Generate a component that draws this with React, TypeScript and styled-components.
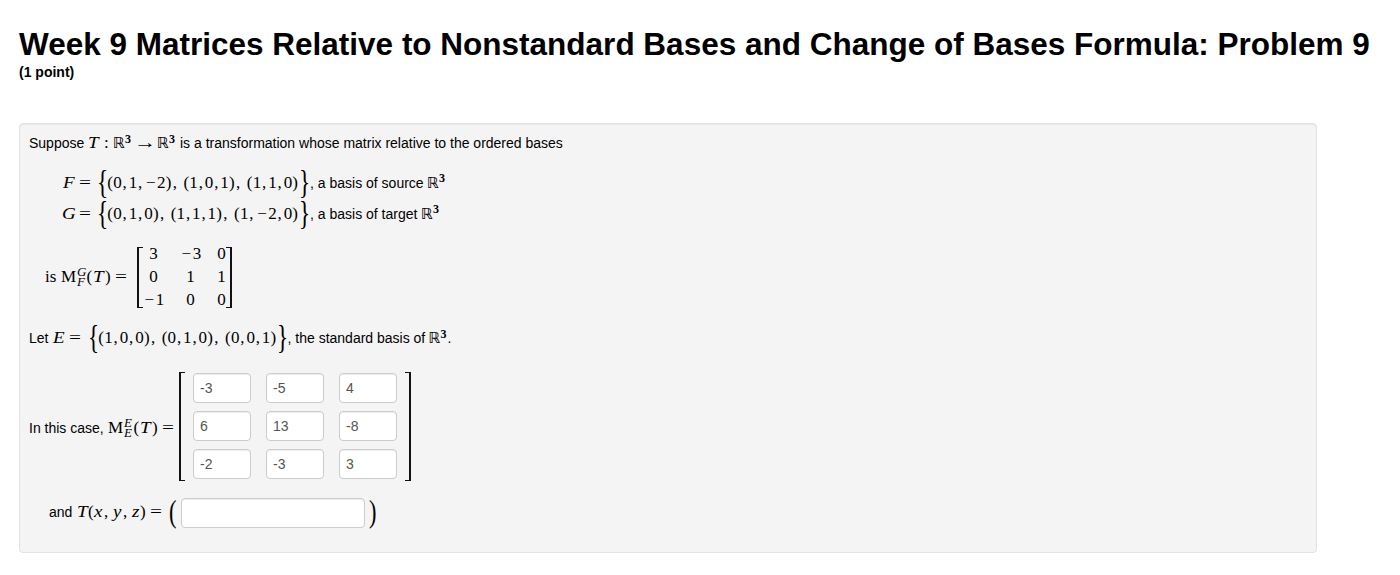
import { ReactNode } from "react"
import styled, { createGlobalStyle } from "styled-components"

const GlobalStyle = createGlobalStyle`
  body {
    margin: 0;
    background-color: #fff;
    color: #000;
    font-family: "Liberation Sans", Arial, sans-serif;
    font-size: 14px;
    line-height: 20px;
  }
`

const Page = styled.main`
  padding: 24px 0 0 19px;
  width: 1381px;
  box-sizing: border-box;
`

const Title = styled.h1`
  margin: 0;
  font-size: 31.5px;
  line-height: 40px;
  font-weight: 700;
  white-space: nowrap;
`

const Points = styled.div`
  margin-bottom: 43px;
  line-height: 16px;
  font-weight: 700;
`

const ProblemBody = styled.section`
  width: 1298px;
  height: 430px;
  box-sizing: border-box;
  padding: 0 9px;
  border: 1px solid #e3e3e3;
  border-radius: 4px;
  background-color: #f4f4f4;
  box-shadow: inset 0 1px 1px rgba(0, 0, 0, 0.05);
`

const Line = styled.div<{ $height: number; $top?: number; $indent?: number }>`
  display: flex;
  align-items: center;
  height: ${(p) => p.$height}px;
  margin-top: ${(p) => p.$top ?? 0}px;
  padding-left: ${(p) => p.$indent ?? 0}px;
  white-space: pre;
`

const Label = styled.div<{ $drop?: number; $lift?: number }>`
  display: flex;
  align-items: center;
  padding-top: ${(p) => p.$drop ?? 0}px;
  padding-bottom: ${(p) => p.$lift ?? 0}px;
`

const Words = styled.span<{ $width?: number }>`
  flex: none;
  width: ${(p) => (p.$width ? `${p.$width}px` : "auto")};
`

const Math = styled.span<{ $width?: number }>`
  display: flex;
  flex: none;
  width: ${(p) => (p.$width ? `${p.$width}px` : "auto")};
  font-family: "Liberation Serif", "Times New Roman", serif;
  font-size: 17px;
`

const Variable = styled(Math)`
  font-style: italic;
  transform: scaleX(1.12);
  transform-origin: left;
`

const Relation = styled(Math)`
  transform: scaleX(1.25);
  transform-origin: left;
`

const Arrow = styled(Math)`
  transform: scaleX(1.3);
  transform-origin: 6px 50%;
`

const Glyph = styled.span<{ $advance: number }>`
  display: flex;
  justify-content: center;
  flex: none;
  width: ${(p) => p.$advance}px;
`

const Comma = styled(Glyph)`
  justify-content: flex-start;
  text-indent: 1px;
`

const Blackboard = styled.span`
  flex: none;
  width: 12px;
  font-family: "DejaVu Sans", sans-serif;
  font-size: 15px;
`

const Exponent = styled.span<{ $width: number }>`
  flex: none;
  width: ${(p) => p.$width}px;
  padding-bottom: 9px;
  font-family: "Liberation Serif", serif;
  font-size: 12px;
  font-weight: 700;
`

const Scripts = styled.span<{ $width: number }>`
  display: flex;
  flex-direction: column;
  flex: none;
  width: ${(p) => p.$width}px;
  font-family: "Liberation Serif", serif;
  font-size: 13px;
  font-style: italic;
  line-height: 9.5px;
`

const Brace = styled.span<{ $width: number }>`
  flex: none;
  width: ${(p) => p.$width}px;
  height: 32px;
  font-family: "Liberation Serif", serif;
  font-size: 33px;
  line-height: 30px;

  > span {
    display: inline-block;
    transform: scaleX(0.7);
    transform-origin: left;
  }
`

const Paren = styled(Brace)`
  font-size: 32px;
  line-height: 29px;
`

const Bracket = styled.span<{ $side: "left" | "right"; $height: number }>`
  flex: none;
  box-sizing: border-box;
  width: 6px;
  height: ${(p) => p.$height}px;
  border: 1px solid #111;
  border-${(p) => p.$side}-width: 2px;
  border-${(p) => (p.$side === "left" ? "right" : "left")}: 0;
`

const MatrixGrid = styled.div`
  display: grid;
  grid-template-columns: 21px 21px 9px;
  grid-auto-rows: 23px;
  column-gap: 16px;
  justify-items: center;
  align-items: center;
  padding-bottom: 1px;
`

const AnswerGrid = styled.div`
  display: grid;
  grid-template-columns: repeat(3, 58px);
  gap: 8px 15px;
  margin: 0 8px;
`

const Answer = styled.input<{ $width: number }>`
  width: ${(p) => p.$width}px;
  height: 30px;
  box-sizing: border-box;
  padding: 4px 6px;
  border: 1px solid #ccc;
  border-radius: 4px;
  background-color: #fff;
  box-shadow: inset 0 1px 1px rgba(0, 0, 0, 0.075);
  color: #555;
  font-family: inherit;
  font-size: 14px;
  line-height: 20px;
  outline: none;
`

const WideAnswer = styled(Answer)`
  margin-right: 4px;
`

// advances in px for upright math glyphs
const advances: Record<string, number> = {
  "(": 6.4,
  ")": 6.4,
  ",": 7.3,
  "−": 12.8,
  " ": 4.1,
}

const Formula = ({ text, width }: { text: string; width?: number }) => (
  <Math $width={width}>
    {text.split("").map((char, i) => {
      const Cell = char === "," ? Comma : Glyph
      return (
        <Cell key={i} $advance={advances[char] ?? 8.2}>
          {char}
        </Cell>
      )
    })}
  </Math>
)

const RealCubed = ({ width = 10 }: { width?: number }) => (
  <>
    <Blackboard>ℝ</Blackboard>
    <Exponent $width={width}>3</Exponent>
  </>
)

const BasisSet = ({ text, width }: { text: string; width: number }) => (
  <>
    <Brace $width={10}>
      <span>{"{"}</span>
    </Brace>
    <Formula text={text} width={width} />
    <Brace $width={11}>
      <span>{"}"}</span>
    </Brace>
  </>
)

const MatrixOf = ({ basis, target, children }: { basis: string; target: string; children?: ReactNode }) => (
  <>
    <Math $width={16}>M</Math>
    <Scripts $width={9.5}>
      <span>{target}</span>
      <span>{basis}</span>
    </Scripts>
    <Math $width={6}>(</Math>
    <Variable $width={12.5}>T</Variable>
    <Math $width={10}>)</Math>
    {children}
  </>
)

const entries = ["3", "−3", "0", "0", "1", "1", "−1", "0", "0"]
const answers = ["-3", "-5", "4", "6", "13", "-8", "-2", "-3", "3"]

const App = () => (
  <>
    <GlobalStyle />
    <Page>
      <Title>Week 9 Matrices Relative to Nonstandard Bases and Change of Bases Formula: Problem 9</Title>
      <Points>(1 point)</Points>

      <ProblemBody>
        <Line $height={38}>
          <Words $width={59}>Suppose</Words>
          <Variable $width={16}>T</Variable>
          <Math $width={9}>:</Math>
          <RealCubed width={11} />
          <Arrow $width={21}>→</Arrow>
          <RealCubed width={11} />
          <Words>is a transformation whose matrix relative to the ordered bases</Words>
        </Line>

        <Line $height={31} $top={5} $indent={34}>
          <Variable $width={16}>F</Variable>
          <Relation $width={18}>=</Relation>
          <BasisSet text="(0,1,−2), (1,0,1), (1,1,0)" width={192} />
          <Words $width={117}>, a basis of source</Words>
          <RealCubed />
        </Line>
        <Line $height={31} $indent={33}>
          <Variable $width={17}>G</Variable>
          <Relation $width={18}>=</Relation>
          <BasisSet text="(0,1,0), (1,1,1), (1,−2,0)" width={192} />
          <Words $width={111}>, a basis of target</Words>
          <RealCubed />
        </Line>

        <Line $height={68} $top={14} $indent={16}>
          <Label $lift={1}>
            <Math $width={16}>is</Math>
            <MatrixOf target="G" basis="F">
              <Relation $width={22}>=</Relation>
            </MatrixOf>
          </Label>
          <Bracket $side="left" $height={61} />
          <MatrixGrid>
            {entries.map((entry, i) => (
              <Formula key={i} text={entry} />
            ))}
          </MatrixGrid>
          <Bracket $side="right" $height={61} />
        </Line>

        <Line $height={32} $top={11}>
          <Words $width={24}>Let</Words>
          <Variable $width={16}>E</Variable>
          <Relation $width={19}>=</Relation>
          <BasisSet text="(1,0,0), (0,1,0), (0,0,1)" width={178.5} />
          <Words $width={141}>, the standard basis of</Words>
          <RealCubed width={7} />
          <Words>.</Words>
        </Line>

        <Line $height={110} $top={17}>
          <Label $drop={3}>
            <Words $width={79}>In this case,</Words>
            <MatrixOf target="E" basis="E">
              <Relation $width={17}>=</Relation>
            </MatrixOf>
          </Label>
          <Bracket $side="left" $height={109} />
          <AnswerGrid>
            {answers.map((value, i) => (
              <Answer key={i} $width={58} defaultValue={value} />
            ))}
          </AnswerGrid>
          <Bracket $side="right" $height={109} />
        </Line>

        <Line $height={32} $top={16} $indent={20}>
          <Label $lift={2}>
            <Words $width={28}>and</Words>
            <Variable $width={11}>T</Variable>
            <Math $width={6}>(</Math>
            <Variable $width={10}>x</Variable>
            <Math $width={9}>,</Math>
            <Variable $width={10}>y</Variable>
            <Math $width={9}>,</Math>
            <Variable $width={8}>z</Variable>
            <Math $width={10}>)</Math>
            <Relation $width={19}>=</Relation>
          </Label>
          <Paren $width={12}>
            <span>(</span>
          </Paren>
          <WideAnswer $width={184} />
          <Paren $width={12}>
            <span>)</span>
          </Paren>
        </Line>
      </ProblemBody>
    </Page>
  </>
)

export default App
